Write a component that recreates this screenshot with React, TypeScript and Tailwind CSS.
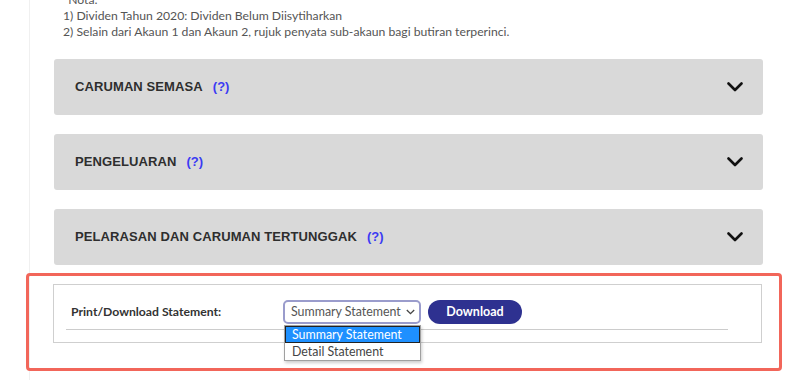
import React from "react";

const sans = { fontFamily: 'Lato, "Open Sans", sans-serif' };

function Chevron() {
  return (
    <svg width="16" height="10" viewBox="0 0 16 10" className="block">
      <path d="M1.5 1.5 L8 8 L14.5 1.5" fill="none" stroke="#111" strokeWidth="2.6" strokeLinecap="round" strokeLinejoin="round" />
    </svg>
  );
}

function Accordion({ title }: { title: string }) {
  return (
    <div className="ml-[24px] w-[709px] h-[56px] bg-[#d9d9d9] rounded-[3px] flex items-center pl-[21px] pr-[20px]">
      <span className="font-['Liberation_Sans',Arial,sans-serif] font-bold text-[13px] text-[#2e2e2e] tracking-[0.1px]">{title}</span>
      <span className="ml-[10px] font-['Liberation_Sans',Arial,sans-serif] font-bold text-[13px] text-[#3b3bf3]">(?)</span>
      <div className="ml-auto">
        <Chevron />
      </div>
    </div>
  );
}

export default function App() {
  return (
    <div className="w-[800px] h-[380px] overflow-hidden bg-white" style={sans}>
      <div className="pl-[29px] h-full">
        <div className="border-l border-[#f0f0f0] h-full flex flex-col">
          <div className="pl-[33px] -mt-[8px] text-[12.2px] leading-[16px] text-[#555]">
            <div>*Nota:</div>
            <div>1) Dividen Tahun 2020: Dividen Belum Diisytiharkan</div>
            <div>2) Selain dari Akaun 1 dan Akaun 2, rujuk penyata sub-akaun bagi butiran terperinci.</div>
          </div>
          <div className="mt-[19px] flex flex-col gap-[19px]">
            <Accordion title="CARUMAN SEMASA" />
            <Accordion title="PENGELUARAN" />
            <Accordion title="PELARASAN DAN CARUMAN TERTUNGGAK" />
          </div>
          <div className="mt-[8px] -ml-[4px] w-[756px] h-[98px] border-[3px] border-[#f2665a] rounded-[4px] pt-[8px]">
            <div className="ml-[24px] w-[709px] h-[59px] border border-[#cfcfcf] pt-[15px]">
              <div className="flex items-center pl-[17px] h-[24px]">
                <div className="w-[212px] text-[12.2px] font-bold text-[#333] whitespace-nowrap">Print/Download Statement:</div>
                <div className="relative">
                  <div className="w-[138px] h-[24px] border-2 border-[#9a9ccc] rounded-[5px] flex items-center pl-[6px] pr-[4px] text-[12.4px] text-[#555] whitespace-nowrap">
                    <span>Summary Statement</span>
                    <svg width="9" height="6" viewBox="0 0 9 6" className="ml-auto">
                      <path d="M0.8 1 L4.5 4.7 L8.2 1" fill="none" stroke="#444" strokeWidth="1.3" />
                    </svg>
                  </div>
                  <div className="absolute left-[1px] top-[25px] w-[137px] bg-white border border-[#a0a0a0] shadow-[1px_2px_3px_rgba(0,0,0,0.2)] text-[12.4px] leading-[17px] z-10 whitespace-nowrap">
                    <div className="bg-[#1e90ff] text-white border border-[#222] pl-[6px] h-[17px] leading-[15px]">Summary Statement</div>
                    <div className="text-[#444] pl-[7px] h-[17px]">Detail Statement</div>
                  </div>
                </div>
                <button className="ml-[7px] w-[94px] h-[24px] rounded-full bg-[#2e3190] text-white text-[12.5px] font-bold">Download</button>
              </div>
              <div className="mt-[5px] ml-[12px] mr-[33px] border-t border-[#cccccc]" />
            </div>
          </div>
        </div>
      </div>
    </div>
  );
}
